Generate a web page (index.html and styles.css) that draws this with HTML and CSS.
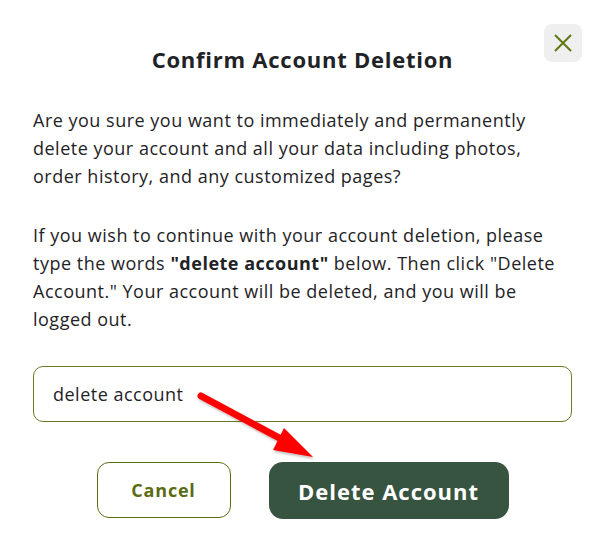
FILE: index.html
```html
<!DOCTYPE html>
<html>
<head>
<meta charset="utf-8">
<link rel="stylesheet" href="styles.css">
</head>
<body>
<div class="modal">
  <button class="close" aria-label="Close">
    <svg width="20" height="20" viewBox="0 0 20 20"><path d="M2 2 L18 18 M18 2 L2 18" stroke="#5d7a12" stroke-width="2" fill="none"/></svg>
  </button>
  <h1 class="title">Confirm Account Deletion</h1>
  <p class="text">Are you sure you want to immediately and permanently delete your account and all your data including photos, order history, and any customized pages?</p>
  <p class="text">If you wish to continue with your account deletion, please type the words <b>"delete account"</b> below. Then click "Delete Account." Your account will be deleted, and you will be logged out.</p>
  <div class="field">delete account</div>
  <div class="actions">
    <button class="btn cancel">Cancel</button>
    <button class="btn delete">Delete Account</button>
  </div>
  <svg class="arrow" width="605" height="550" viewBox="0 0 605 550">
    <defs>
      <filter id="sh" x="-20%" y="-20%" width="140%" height="140%">
        <feDropShadow dx="1" dy="2" stdDeviation="1.2" flood-color="#000" flood-opacity="0.25"/>
      </filter>
    </defs>
    <g filter="url(#sh)">
      <line x1="201" y1="396" x2="285" y2="441" stroke="#ff0000" stroke-width="7" stroke-linecap="round"/>
      <polygon points="313,457 273,450 284,428" fill="#ff0000"/>
    </g>
  </svg>
</div>
</body>
</html>
```
FILE: styles.css
```css
* { box-sizing: border-box; }
html, body { margin: 0; padding: 0; background: #fff; }
body {
  font-family: "Open Sans", "Noto Sans", sans-serif;
  color: #222;
  letter-spacing: 0.5px;
}
.modal {
  position: relative;
  width: 605px;
  height: 550px;
  padding: 43px 33px 0 33px;
}
.close {
  position: absolute;
  top: 24px;
  left: 544px;
  width: 38px;
  height: 38px;
  border: none;
  border-radius: 8px;
  background: #efefef;
  display: flex;
  align-items: center;
  justify-content: center;
  padding: 0;
}
.title {
  margin: 0;
  text-align: center;
  font-size: 22px;
  font-weight: 700;
  line-height: 32px;
  letter-spacing: 0.75px;
  color: #1f2326;
}
.text {
  margin: 31px 0 0 0;
  font-size: 18px;
  line-height: 28px;
  color: #1f2326;
}
.text + .text { margin-top: 31px; }
.text b { font-weight: 700; }
.field {
  margin-top: 33px;
  height: 56px;
  border: 1px solid #6a7a22;
  border-radius: 10px;
  padding: 0 19px;
  display: flex;
  align-items: center;
  font-size: 18px;
  color: #1f2326;
}
.actions {
  margin-top: 40px;
  display: flex;
  justify-content: center;
  gap: 38px;
}
.btn {
  font-family: inherit;
  font-weight: 700;
  cursor: pointer;
}
.cancel {
  width: 134px;
  height: 56px;
  background: #fff;
  border: 1px solid #5a6e12;
  border-radius: 12px;
  color: #5a6b12;
  font-size: 18px;
  letter-spacing: 0.8px;
}
.delete {
  width: 240px;
  height: 57px;
  background: #375441;
  border: none;
  border-radius: 14px;
  color: #fff;
  font-size: 22px;
  letter-spacing: 1px;
}
.arrow {
  position: absolute;
  top: 0;
  left: 0;
  pointer-events: none;
}
```
